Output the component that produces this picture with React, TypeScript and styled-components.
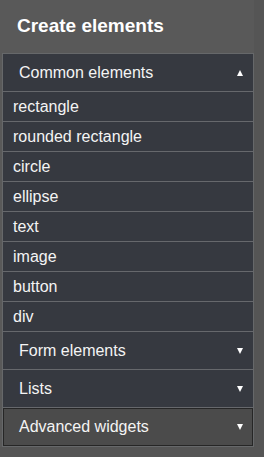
import React from "react";
import styled, { createGlobalStyle } from "styled-components";

const Global = createGlobalStyle`
  html, body { margin: 0; padding: 0; background: #555555; }
  body { font-family: "Liberation Sans", Arial, Helvetica, sans-serif; }
`;

const Panel = styled.div`
  width: 254px;
  height: 447px;
  background: #595959;
  padding: 0 0 0 2px;
  box-sizing: border-box;
  display: flex;
  flex-direction: column;
`;

const Title = styled.h1`
  margin: 0;
  height: 53px;
  box-sizing: border-box;
  padding: 15px 0 0 15px;
  font-size: 19px;
  font-weight: bold;
  color: #ffffff;
  line-height: 22px;
`;

const Accordion = styled.div`
  display: flex;
  flex-direction: column;
  border: 1px solid #66686a;
  background: #363940;
`;

const Header = styled.div<{ $dark?: boolean }>`
  height: 38px;
  box-sizing: border-box;
  display: flex;
  align-items: center;
  justify-content: space-between;
  padding: 0 10px 0 16px;
  color: #f4f4f4;
  font-size: 16px;
  background: ${(p) => (p.$dark ? "#4b4b4b" : "#363940")};
  border-bottom: 1px solid #66686c;
  ${(p) => (p.$dark ? "border: 1px solid #262626; padding-left: 15px; padding-right: 9px;" : "")}
`;

const Item = styled.div`
  height: 30px;
  box-sizing: border-box;
  display: flex;
  align-items: center;
  padding: 1px 0 0 10px;
  color: #f4f4f4;
  font-size: 16px;
  border-bottom: 1px solid #66686c;
`;

const Arrow = styled.span<{ $up?: boolean }>`
  width: 0;
  height: 0;
  border-left: 3.5px solid transparent;
  border-right: 3.5px solid transparent;
  ${(p) =>
    p.$up
      ? "border-bottom: 6px solid #ffffff;"
      : "border-top: 6px solid #ffffff;"}
`;

const items = [
  "rectangle",
  "rounded rectangle",
  "circle",
  "ellipse",
  "text",
  "image",
  "button",
  "div",
];

export default function App() {
  return (
    <>
      <Global />
      <Panel>
        <Title>Create elements</Title>
        <Accordion>
          <Header>
            Common elements
            <Arrow $up />
          </Header>
          {items.map((i) => (
            <Item key={i}>{i}</Item>
          ))}
          <Header>
            Form elements
            <Arrow />
          </Header>
          <Header>
            Lists
            <Arrow />
          </Header>
          <Header $dark>
            Advanced widgets
            <Arrow />
          </Header>
        </Accordion>
      </Panel>
    </>
  );
}
